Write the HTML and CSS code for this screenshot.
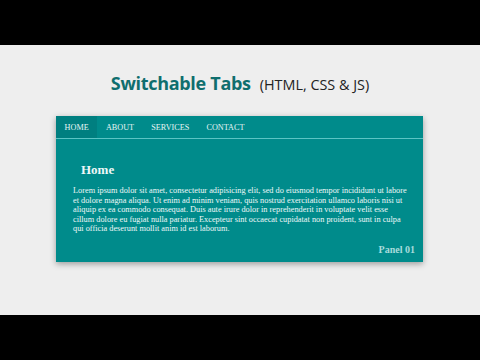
FILE: index.html
```html
<!DOCTYPE html>
<html>
<head>
<meta charset="utf-8">
<link rel="stylesheet" href="styles.css">
</head>
<body>
<div class="bar"></div>
<main class="stage">
  <h1 class="title"><span class="title-main">Switchable Tabs</span><span class="title-sub">(HTML, CSS &amp; JS)</span></h1>
  <section class="tabs">
    <nav class="tab-nav">
      <a class="tab active">HOME</a>
      <a class="tab">ABOUT</a>
      <a class="tab">SERVICES</a>
      <a class="tab">CONTACT</a>
    </nav>
    <div class="panel">
      <h2 class="panel-title">Home</h2>
      <p class="panel-text">Lorem ipsum dolor sit amet, consectetur adipisicing elit, sed do eiusmod tempor incididunt ut labore et dolore magna aliqua. Ut enim ad minim veniam, quis nostrud exercitation ullamco laboris nisi ut aliquip ex ea commodo consequat. Duis aute irure dolor in reprehenderit in voluptate velit esse cillum dolore eu fugiat nulla pariatur. Excepteur sint occaecat cupidatat non proident, sunt in culpa qui officia deserunt mollit anim id est laborum.</p>
      <div class="panel-num">Panel 01</div>
    </div>
  </section>
</main>
<div class="bar"></div>
</body>
</html>
```
FILE: styles.css
```css
html, body { margin: 0; padding: 0; }
body { background: #000; width: 480px; height: 360px; overflow: hidden; }
.bar { height: 45px; background: #000; }
.stage {
  height: 270px;
  background: #eeeeee;
  display: flex;
  flex-direction: column;
  align-items: flex-start;
}
.title {
  margin: 26px 0 0 0;
  align-self: center;
  display: flex;
  align-items: baseline;
  gap: 9px;
  height: 45px;
  font-weight: normal;
}
.title-main {
  font-family: "Open Sans", sans-serif;
  font-weight: 700;
  font-size: 18px;
  color: #0f6e6e;
  letter-spacing: -0.3px;
}
.title-sub {
  font-family: "Open Sans", sans-serif;
  font-size: 14.4px;
  color: #222;
}
.tabs {
  margin-left: 56px;
  width: 367px;
  background: #008b8b;
  box-shadow: 0 2px 6px rgba(0,0,0,0.35);
  font-family: "Liberation Serif", serif;
}
.tab-nav {
  display: flex;
  height: 22px;
  border-bottom: 1px solid #5cc4c4;
}
.tab {
  display: flex;
  align-items: center;
  padding: 0 8.6px;
  font-size: 8.2px;
  color: #e6f4f4;
}
.tab.active { background: #007f80; }
.panel { padding: 17px 15px 7px 17px; color: #eef8f8; }
.panel-title {
  margin: 6px 0 8px 8px;
  font-size: 13px;
  font-weight: 700;
}
.panel-text {
  margin: 0;
  font-size: 8.3px;
  line-height: 9.5px;
}
.panel-num {
  margin-top: 10px;
  margin-right: -7px;
  text-align: right;
  font-size: 10px;
  font-weight: 700;
  color: #a9dcdc;
}
```
